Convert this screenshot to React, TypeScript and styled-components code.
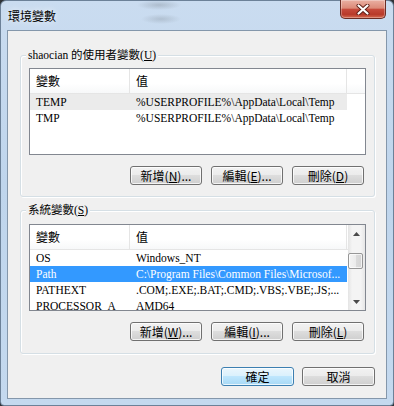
import styled, { createGlobalStyle } from "styled-components";

const GlobalStyle = createGlobalStyle`
  html, body {
    margin: 0;
    padding: 0;
    background: #2f3338;
  }
  #root {
    width: 394px;
    height: 406px;
  }
`;

const Window = styled.div`
  box-sizing: border-box;
  width: 394px;
  height: 406px;
  display: flex;
  flex-direction: column;
  padding: 0 6px 6px;
  border: 1px solid #6c8198;
  border-radius: 6px 6px 4px 4px;
  background:
    radial-gradient(ellipse 22px 5px at 158px 4px, rgba(120, 130, 140, 0.35), transparent),
    radial-gradient(ellipse 20px 5px at 160px 18px, rgba(120, 130, 140, 0.3), transparent),
    linear-gradient(180deg, #cadcf0 0%, #bfd5ec 45%, #c4d9ef 100%);
  font-family: "Noto Sans CJK TC", sans-serif;
  color: #000;
`;

const TitleBar = styled.div`
  flex: none;
  height: 29px;
  display: flex;
  justify-content: space-between;
  align-items: flex-start;
`;

const Title = styled.span`
  padding: 8px 0 0 1px;
  font-size: 12px;
  line-height: 14px;
  text-shadow: 0 0 6px rgba(255, 255, 255, 0.9);
`;

const CloseButton = styled.button`
  width: 46px;
  height: 19px;
  margin: -1px 1px 0 0;
  padding: 0;
  display: flex;
  align-items: center;
  justify-content: center;
  border: 1px solid #6a2d25;
  border-top: none;
  border-radius: 0 0 5px 5px;
  background: linear-gradient(180deg, #eab0a3 0%, #dc8a78 45%, #c64a3b 52%, #b83a2a 80%, #d56a50 100%);
  box-shadow: inset 0 0 0 1px rgba(255, 255, 255, 0.3);
`;

const Client = styled.div`
  flex: 1;
  display: flex;
  flex-direction: column;
  border: 1px solid #8497ab;
  background: #f0f0f0;
  padding: 24px 11px 12px 12px;
`;

const GroupBox = styled.section<{ $top: number; $bottom: number; $mt: number }>`
  position: relative;
  margin-top: ${({ $mt }) => $mt}px;
  padding: ${({ $top, $bottom }) => `${$top}px 8px ${$bottom}px`};
  border: 1px solid #d5dfe5;
  border-radius: 3px;
  box-shadow: inset 1px 1px 0 #fff, 1px 1px 0 #fff;
`;

const GroupTitle = styled.h2`
  position: absolute;
  top: -8px;
  left: 5px;
  margin: 0;
  padding: 0 2px;
  background: #f0f0f0;
  font: 400 11.5px/15px "Liberation Serif", "Noto Sans CJK TC", serif;
`;

const ListView = styled.div`
  box-sizing: border-box;
  height: 87px;
  display: flex;
  border: 1px solid #828790;
  background: #fff;
  overflow: hidden;
`;

const ListBody = styled.div`
  flex: 1;
  min-width: 0;
`;

const HeaderRow = styled.div`
  box-sizing: border-box;
  height: 25px;
  display: flex;
  border-bottom: 1px solid #e5e5e5;
  background: linear-gradient(180deg, #fff 0%, #fff 60%, #f7f8f9 100%);
`;

const HeaderCell = styled.div<{ $w?: number }>`
  box-sizing: border-box;
  width: ${({ $w }) => ($w ? `${$w}px` : "auto")};
  flex: ${({ $w }) => ($w ? "none" : "1")};
  padding-left: 6px;
  border-right: ${({ $w }) => ($w ? "1px solid #e5e5e5" : "none")};
  font-size: 12px;
  line-height: 24px;
`;

const Row = styled.div<{ $state?: "selected" | "inactive" }>`
  width: 317px;
  height: 16px;
  display: flex;
  background: ${({ $state }) =>
    $state === "selected" ? "#3399ff" : $state === "inactive" ? "#ebebeb" : "transparent"};
  color: ${({ $state }) => ($state === "selected" ? "#fff" : "#000")};
`;

const Cell = styled.div<{ $w: number }>`
  box-sizing: border-box;
  width: ${({ $w }) => $w}px;
  padding-left: 6px;
  white-space: nowrap;
  overflow: hidden;
  font: 11.5px/16px "Liberation Serif", "Noto Sans CJK TC", serif;
`;

const ScrollBar = styled.div`
  flex: none;
  width: 17px;
  display: flex;
  flex-direction: column;
  background: linear-gradient(90deg, #e4e4e4 0%, #f4f4f4 25%, #f4f4f4 75%, #e6e6e6 100%);
`;

const ScrollArrow = styled.div`
  height: 17px;
  display: flex;
  align-items: center;
  justify-content: center;
`;

const ScrollTrack = styled.div`
  flex: 1;
  padding-top: 11px;
`;

const Thumb = styled.div`
  box-sizing: border-box;
  width: 15px;
  height: 16px;
  border: 1px solid #979797;
  border-radius: 2px;
  background: linear-gradient(90deg, #f4f4f4 0%, #ececec 50%, #dcdcdc 50%, #d4d4d4 100%);
  box-shadow: inset 0 0 0 1px rgba(255, 255, 255, 0.7);
`;

const ButtonRow = styled.div<{ $gap: number; $mt: number; $mr: number }>`
  display: flex;
  justify-content: flex-end;
  gap: ${({ $gap }) => $gap}px;
  margin-top: ${({ $mt }) => $mt}px;
  margin-right: ${({ $mr }) => $mr}px;
`;

const Button = styled.button<{ $default?: boolean; $w: number }>`
  box-sizing: border-box;
  width: ${({ $w }) => $w}px;
  height: 19px;
  padding: 0;
  border: 1px solid ${({ $default }) => ($default ? "#3c7fb1" : "#707070")};
  border-radius: 3px;
  background: ${({ $default }) =>
    $default
      ? "linear-gradient(180deg, #eaf6fd 0%, #d9f0fc 50%, #bee6fd 50%, #a7d9f5 100%)"
      : "linear-gradient(180deg, #f2f2f2 0%, #ebebeb 50%, #dddddd 50%, #cfcfcf 100%)"};
  box-shadow: inset 0 0 0 1px rgba(255, 255, 255, 0.75);
  font: 12px/16px "Noto Sans CJK TC", sans-serif;
  color: #000;
`;

const Arrow = ({ up }: { up?: boolean }) => (
  <svg width="7" height="4" viewBox="0 0 7 4">
    <path d={up ? "M0 4 L3.5 0 L7 4 Z" : "M0 0 L7 0 L3.5 4 Z"} fill="#4a4a4a" />
  </svg>
);

const CloseIcon = () => (
  <svg width="14" height="11" viewBox="0 0 14 11">
    <path d="M2.5 1.5 L11.5 9.5 M11.5 1.5 L2.5 9.5" stroke="#5b1c14" strokeWidth="4" strokeLinecap="round" />
    <path d="M2.5 1.5 L11.5 9.5 M11.5 1.5 L2.5 9.5" stroke="#fff" strokeWidth="2.2" strokeLinecap="round" />
  </svg>
);

type Variable = { name: string; value: string; state?: "selected" | "inactive" };

const userVars: Variable[] = [
  { name: "TEMP", value: "%USERPROFILE%\\AppData\\Local\\Temp", state: "inactive" },
  { name: "TMP", value: "%USERPROFILE%\\AppData\\Local\\Temp" },
];

const systemVars: Variable[] = [
  { name: "OS", value: "Windows_NT" },
  { name: "Path", value: "C:\\Program Files\\Common Files\\Microsof...", state: "selected" },
  { name: "PATHEXT", value: ".COM;.EXE;.BAT;.CMD;.VBS;.VBE;.JS;..." },
  { name: "PROCESSOR_A", value: "AMD64" },
];

const VariableRows = ({ items }: { items: Variable[] }) => (
  <>
    {items.map((v) => (
      <Row key={v.name} $state={v.state}>
        <Cell $w={100}>{v.name}</Cell>
        <Cell $w={217}>{v.value}</Cell>
      </Row>
    ))}
  </>
);

export default function App() {
  return (
    <>
      <GlobalStyle />
      <Window>
        <TitleBar>
          <Title>環境變數</Title>
          <CloseButton aria-label="關閉">
            <CloseIcon />
          </CloseButton>
        </TitleBar>
        <Client>
          <GroupBox $top={12} $bottom={11} $mt={0}>
            <GroupTitle>
              shaocian 的使用者變數(<u>U</u>)
            </GroupTitle>
            <ListView>
              <ListBody>
                <HeaderRow>
                  <HeaderCell $w={100}>變數</HeaderCell>
                  <HeaderCell $w={217}>值</HeaderCell>
                  <HeaderCell />
                </HeaderRow>
                <VariableRows items={userVars} />
              </ListBody>
            </ListView>
            <ButtonRow $gap={9} $mt={11} $mr={2}>
              <Button $w={72}>
                新增(<u>N</u>)...
              </Button>
              <Button $w={72}>
                編輯(<u>E</u>)...
              </Button>
              <Button $w={72}>
                刪除(<u>D</u>)
              </Button>
            </ButtonRow>
          </GroupBox>

          <GroupBox $top={13} $bottom={12} $mt={13}>
            <GroupTitle>
              系統變數(<u>S</u>)
            </GroupTitle>
            <ListView>
              <ListBody>
                <HeaderRow>
                  <HeaderCell $w={100}>變數</HeaderCell>
                  <HeaderCell $w={217}>值</HeaderCell>
                  <HeaderCell />
                </HeaderRow>
                <VariableRows items={systemVars} />
              </ListBody>
              <ScrollBar>
                <ScrollArrow>
                  <Arrow up />
                </ScrollArrow>
                <ScrollTrack>
                  <Thumb />
                </ScrollTrack>
                <ScrollArrow>
                  <Arrow />
                </ScrollArrow>
              </ScrollBar>
            </ListView>
            <ButtonRow $gap={9} $mt={11} $mr={2}>
              <Button $w={72}>
                新增(<u>W</u>)...
              </Button>
              <Button $w={72}>
                編輯(<u>I</u>)...
              </Button>
              <Button $w={72}>
                刪除(<u>L</u>)
              </Button>
            </ButtonRow>
          </GroupBox>

          <ButtonRow $gap={8} $mt={13} $mr={0}>
            <Button $w={73} $default>
              確定
            </Button>
            <Button $w={73}>取消</Button>
          </ButtonRow>
        </Client>
      </Window>
    </>
  );
}
